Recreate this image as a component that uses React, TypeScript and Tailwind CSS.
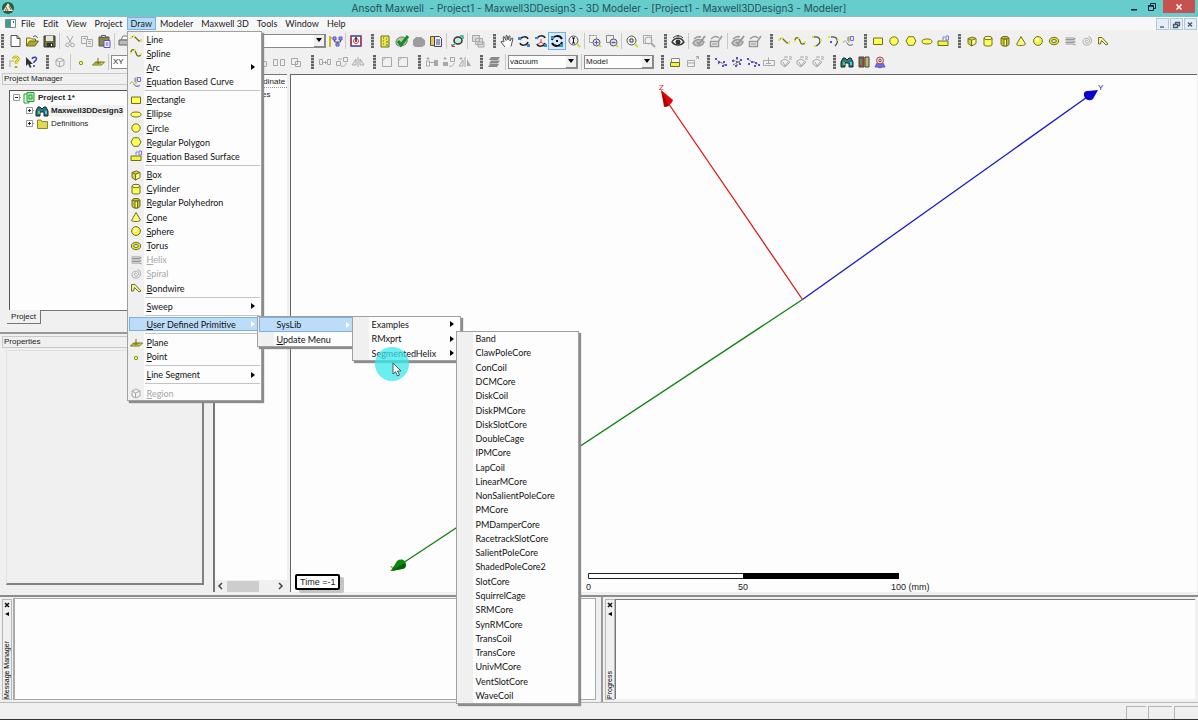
import { ReactNode, useState } from "react";

const Y = "#ffff55";
const D = "#6f6f20";
const G = "#a8a8a8";
const B = "#5050d8";

// Every icon is drawn on a 16x16 grid
const icons: Record<string, ReactNode> = {
    novo: <path d="M4 2.5h6l3 3v8H4zM10 2.5v3h3" fill="#fff" stroke="#555" />,
    open: <><path d="M2.500 13V5h4l1 1h4v2" fill="#f4f48c" stroke={D} /><path d="M2.500 13l3-5h9l-3.500 5z" fill="#a9a92c" stroke={D} /><path d="M9 4c2-2 4-1 4.500 1" stroke="#444" /></>,
    save: <><path d="M3 3h11v11H3z" fill="#6c7034" stroke="#333" /><path d="M5 3h7v5H5z" fill="#e6e6e6" /><path d="M6 10h6v4H6z" fill="#333" /><path d="M10 11h1v2h-1z" fill="#fff" /></>,
    cut: <><path d="M5 3l4 7M11 3l-4 7" stroke={G} /><circle cx="5.500" cy="12" r="1.800" stroke={G} /><circle cx="10.500" cy="12" r="1.800" stroke={G} /></>,
    copy: <><path d="M2.500 3.500h6v7h-6z" stroke={G} /><path d="M7.500 6.500h6v7h-6z" fill="#eee" stroke={G} /><path d="M9 8.500h3M9 10.500h3M4 5.500h3" stroke={G} /></>,
    paste: <><path d="M3 4h10v9H3z" fill="#8e8a3c" stroke="#555" /><path d="M5.500 2.500h4v2h-4z" fill="#ddd" stroke="#555" /><path d="M8 7.500h6v7H8z" fill="#fff" stroke={B} /><path d="M9.500 10h3M9.500 12h3" stroke={B} /></>,
    print: <><path d="M4 7l2-4h7l-2 4z" fill="#fff" stroke="#777" /><path d="M2 7h12v5H2z" fill="#bbb" stroke="#666" /></>,
    tree: <><path d="M3 3v11M3 5h2" stroke="#d8b820" strokeWidth="2" /><path d="M6 4h3v3H6zM12 4h3v3h-3zM9 10h3v3H9z" fill="#9a9ae8" stroke={B} /><path d="M7.500 7v2h6V7M10.500 9v1" stroke="#555" /></>,
    stop: <><path d="M3 3h10v10H3z" fill="#fff" stroke="#3a3a90" strokeWidth="1.500" /><path d="M3.500 3v10M12.500 3v10" stroke="#d33" /><circle cx="8" cy="8" r="2.500" stroke="#d33" /><path d="M8 4v5" stroke="#224" strokeWidth="1.500" /></>,
    valid: <><path d="M4 3h8v11H4z" fill="#e8e840" stroke={D} /><path d="M6 5h1M9 6h1M6 8h1M9 9h2M6 11h1M9 12h2" stroke="#665" /></>,
    check: <><path d="M2 9c0-3 3-5 6-5s6 2 5 5-4 4-7 4-4-1-4-4z" fill="#a8d0a8" stroke="#777" /><path d="M4 8l3 4 7-9" stroke="#188c28" strokeWidth="3" /></>,
    analyze: <path d="M2 12V7l3-3h5l4 3v5l-3 2H4z" fill="#9d9d9d" />,
    notes: <><path d="M2.500 3.500h6v9h-6z" fill="#e8c850" stroke="#555" /><path d="M6.500 3.500h5l2 2v8h-7z" fill="#ececff" stroke="#446" /><path d="M8 7h4M8 9h4M8 11h4" stroke="#446" /></>,
    field: <><ellipse cx="9" cy="7.500" rx="4" ry="3.500" fill="#c9e8de" stroke="#333" strokeWidth="1.500" /><path d="M3 13l4-3M11 3h3v3" stroke="#3a8" strokeWidth="1.500" /><path d="M3 11v2.500h3" stroke="#c33" /></>,
    windows: <path d="M2.500 2.500h7v6h-7zM5.500 5.500h7v6h-7zM8 9h6v5H8z" fill="#ddd" stroke={G} />,
    hand: <path d="M6 14l-4-5 1-1 2 1-1-5 1-.5 2 4V2.500h1L9 7l1-4h1v5l2-3 1 .5-2 8" fill="#fff" stroke="#555" />,
    rot1: <><path d="M4 7c1-4 7-4 8-1M12 9c-1 4-7 4-8 1" stroke="#222" strokeWidth="1.500" /><path d="M2 4h3v3H2zM11 11h3v3h-3z" fill="#38d" /></>,
    rot2: <><path d="M4 6c1-4 7-4 8-1M12 10c-1 4-7 4-8 1" stroke="#222" strokeWidth="1.500" /><path d="M8 6v3l-3 2M8 9l3 2" stroke="#d44" /><path d="M2 4h3v2H2zM11 11h3v3h-3z" fill="#38d" /></>,
    rot3: <><path d="M3 7c1-5 8-5 10-1M13 9c-1 5-8 5-10 1" stroke="#111" strokeWidth="2" /><path d="M2 3h3v3H2zM11 11h3v3h-3z" fill="#29c" /><path d="M7 7h2v2H7z" fill="#111" /></>,
    zoomI: <><circle cx="7.500" cy="7.500" r="4.500" fill="#eee" stroke="#555" /><path d="M7.500 5v5M6 5h3M6 10h3" stroke="#111" /><path d="M11 11l3 3" stroke="#d8d830" strokeWidth="2" /></>,
    zoomIn: <><path d="M2.500 2.500h7v7h-7z" stroke="#888" strokeDasharray="2 1" /><circle cx="9.500" cy="9.500" r="3.500" fill="#e4e4ff" stroke="#555" /><path d="M7.500 9.500h4M9.500 7.500v4" stroke={B} /><path d="M12 12l2 2" stroke="#d8d830" strokeWidth="2" /></>,
    zoomOut: <><path d="M2.500 2.500h7v7h-7z" stroke="#888" /><circle cx="9.500" cy="9.500" r="3.500" fill="#e4e4ff" stroke="#555" /><path d="M7.500 9.500h4" stroke={B} strokeWidth="1.500" /><path d="M12 12l2 2" stroke="#d8d830" strokeWidth="2" /></>,
    fit: <><circle cx="7.500" cy="7.500" r="4.500" fill="#eee" stroke="#555" /><path d="M6 6h3v3H6z" stroke="#444" /><path d="M11 11l3 3" stroke="#d8d830" strokeWidth="2" /></>,
    fitSel: <><path d="M2.500 2.500h8v8h-8z" stroke={G} /><circle cx="7.500" cy="7.500" r="3.500" stroke={G} /><path d="M10 10l4 4" stroke={G} strokeWidth="2" /></>,
    eye: <><path d="M2 9c3-5 9-5 12 0-3 4-9 4-12 0z" fill="#fff" stroke="#333" strokeWidth="1.300" /><circle cx="8" cy="9" r="2.500" fill="#333" /><path d="M3 5c3-3 7-3 10 0M8 2v2" stroke="#333" /></>,
    eyeOff: <><path d="M2 10c2-4 8-5 11-1-2 5-9 5-11 1zM3 6c2-2 5-3 7-2" fill="#ccc" stroke="#999" strokeWidth="1.500" /><path d="M6 9l2 2 6-8" stroke="#999" strokeWidth="2" /></>,
    eyeBox: <><path d="M3 6c3-3 6-3 8-1M2.500 8.500h8v5h-8zM10 9l4-6" stroke="#999" strokeWidth="1.500" /><path d="M4 10h5v2H4z" fill="#bbb" /></>,
    line: <><path d="M4 6l2-1 3 3 2 2 3-1" stroke={D} strokeWidth="1.300" /><path d="M2 6h2v2H2zM5 4h2v2H5zM12 9h2v2h-2z" fill="#e8e838" /></>,
    spline: <><path d="M3 8c0-5 4-4 5 0s4 4 5 1" stroke={D} strokeWidth="1.300" /><path d="M2 7h2v2H2zM6 4h2v2H6zM12 8h2v2h-2z" fill="#e8e838" /></>,
    arc: <><path d="M5 4c7-1 8 6 2 9" stroke="#555" strokeWidth="1.300" /><path d="M3 3h2v2H3zM11 6h2v2h-2zM5 12h2v2H5z" fill="#e0e030" /></>,
    arc2: <><path d="M6 4c7-1 8 5 4 9" stroke="#555" strokeWidth="1.300" /><path d="M3 3h2v2H3zM12 6h2v2h-2z" fill="#e0e030" /><path d="M5 8h2v2H5z" fill={B} /></>,
    eqCurve: <><path d="M2 10c2-4 3-2 4 0s3 3 6 1M8 3v7" stroke="#b8a830" /><path d="M7 4v4M9.500 3.500h3v4h-3zM6 10c1 3 5 3 6 1" stroke="#7070e0" /></>,
    rect: <path d="M3.500 5h9v6.500h-9z" fill={Y} stroke={D} />,
    ellipse: <ellipse cx="8" cy="8.500" rx="5" ry="2.500" fill={Y} stroke={D} />,
    circle: <circle cx="8" cy="8" r="4.200" fill={Y} stroke={D} />,
    polygon: <path d="M3 8l2.500-4.300h5L13 8l-2.500 4.300h-5z" fill={Y} stroke={D} />,
    eqSurf: <><path d="M3 8h10v4.500H3z" fill="#f4f440" stroke={D} /><path d="M8 7V4h2M11 3h2.500v4H11z" stroke="#7a7ae8" /></>,
    box: <><path d="M4 5.500L8.500 4 12 5.500v5L7.500 13 4 10.500z" fill="#d8d838" stroke={D} /><path d="M4 5.500l3.500 1.700V13M7.500 7.200L12 5.500" stroke={D} /><path d="M8.300 7.800l3-1.200v3.600l-3 1.600z" fill="#fdfdb8" /></>,
    cylinder: <><path d="M4 5v7c1 1.500 7 1.500 8 0V5z" fill={Y} stroke={D} /><ellipse cx="8" cy="5" rx="4" ry="1.700" fill="#fdfdb8" stroke={D} /></>,
    polyhedron: <><path d="M4 5v6.500L6 13h4l2-1.500V5l-2-1.500H6z" fill="#c4c438" stroke={D} /><path d="M7 6h2.500v7H7z" fill={Y} stroke={D} /><path d="M4 5l3 1h3l2-1" stroke={D} /></>,
    cone: <path d="M8 3.500L12.500 11c-1 2-8 2-9 .5z" fill="#fafa7a" stroke={D} />,
    sphere: <><circle cx="8" cy="8" r="4.400" fill="#f4f440" stroke={D} /><circle cx="7" cy="6.800" r="2" fill="#fdfdb8" /></>,
    torus: <><ellipse cx="8" cy="8" rx="4.700" ry="3.700" fill="#e4e440" stroke={D} /><ellipse cx="8" cy="8" rx="2.300" ry="1.500" fill="#f2f2f2" stroke={D} /></>,
    helix: <path d="M3.500 5h8l2 1M3.500 8h8l2 1M3.500 11h8l2 1M3.500 6.500h9M3.500 9.500h9" stroke="#999" strokeWidth="1.200" />,
    spiral: <path d="M8 8c1-1.500-1.500-1.500-1.500.5 0 2.500 4 2 4-.8 0-3.500-6.500-3.300-6.500 1 0 5 8.500 4.500 8.500-1 0-2-1-3.700-3-4.200" stroke={G} />,
    bond: <path d="M3.500 11V4.500h3.500l6 6.500-2 1L6.500 7.500 5.500 11z" fill="#f2f2a8" stroke={D} />,
    plane: <><path d="M2.500 11l3-3h9l-3 3z" fill="#e8e838" stroke={D} /><path d="M8 4v6M5 9h6" stroke={D} /></>,
    point: <circle cx="8" cy="9" r="1.700" fill={Y} stroke="#7f8f20" />,
    region: <><path d="M4 6l4-2 4 2v5l-4 2-4-2z" stroke={G} /><path d="M4 6l3.500 2v5M7.500 8L12 6" stroke={G} /></>,
    help1: <><path d="M3 13V7h4" stroke="#ccb" strokeWidth="2" /><path d="M6 5c1-4 7-2 5 1L9 8v2M9 12v2" stroke="#b8a800" strokeWidth="2.500" /><path d="M6 5c1-4 7-2 5 1L9 8v2" stroke="#ffff50" strokeWidth="1" /></>,
    help2: <><path d="M3 3v9l2-2 2 4 1.500-1L7 10h3z" fill="#333" /><path d="M9 5c1-3 6-2 4 1l-2 2v1M11 11v2" stroke="#3838b0" strokeWidth="1.500" /></>,
    unite: <path d="M3.500 4.500h6v6h-6zM7.500 7.500h5v5h-5z" stroke={G} />,
    sub: <path d="M2.500 5.500h4v6h-4zM9.500 5.500h4v6h-4z" stroke={G} />,
    move: <path d="M2.500 5.500h3v5h-3zM10.500 5.500h3v5h-3zM6 8.500h4M8 7l1.500 1.500L8 10" stroke={G} />,
    turn: <path d="M2.500 7.500h4v4h-4zM9.500 3.500h4v4h-4zM7 12c3 1 5-1 5-3M4 5h4" stroke={G} />,
    mirror: <path d="M8 3v10M6 5l-4 6h4zM10 5l4 6h-4z" stroke={G} />,
    fillet: <path d="M3.500 12.500v-9h9v9zM3.500 7l3.500-3.500" stroke={G} />,
    dupMove: <><path d="M2.500 7h3v5h-3zM6 8.500h4M4 3v3M2.500 4.500h3" stroke={G} /><path d="M10 6h4v6h-4z" fill={G} /></>,
    dupTurn: <><path d="M2 8h5v4H2z" fill={G} /><path d="M9.500 3.500h4v4h-4zM8 12c3 1 5-1 5-3M4 3v3M2.500 4.500h3" stroke={G} /></>,
    dupMirror: <><path d="M8 3v10M6 6l-4 6h4zM4 3v3M2.500 4.500h3" stroke={G} /><path d="M10 5l4 7h-4z" fill={G} /></>,
    layers: <path d="M5 3h9l-2 3H3zM5 6.500h9l-2 3H3zM4 10h9l-2 3H2z" fill="#8a8a8a" />,
    slice: <><path d="M4.500 4.500h8v4h-8z" fill="#fff" stroke="#888" /><path d="M3.500 8.500h9v4h-9z" fill="#f0f040" stroke={D} /></>,
    expand: <path d="M3.500 6.500h7v6h-7zM3.500 9h7M12 5l2-2M12 2.500h2.500V5" stroke={G} />,
    cs1: <><path d="M3 5l3 3 3 1 4 3M5 10l3-2" stroke="#555" strokeDasharray="2 1" /><path d="M2 4h2v2H2zM5 7h2v2H5zM10 7h2v2h-2zM9 11h2v2H9zM12 10h2v2h-2z" fill={B} /></>,
    cs2: <><path d="M8 4v9M4 6l7 3M4 11l7-4" stroke="#555" strokeDasharray="2 1" /><path d="M7 3h2v2H7zM3 6h2v2H3zM11 5h2v2h-2zM6 11h2v2H6zM10 9h2v2h-2z" fill={B} /></>,
    cs3: <><path d="M3 5l4 3h4l3 3M10 12l2-2" stroke="#555" strokeDasharray="2 1" /><path d="M2 4h2v2H2zM6 7h2v2H6zM3 9h2v2H3zM10 8h2v2h-2zM13 10h2v2h-2zM9 11h2v2H9z" fill={B} /></>,
    face: <path d="M2.500 6.500h11v5h-11zM7.500 3.500v6M5 9.500h5" stroke={G} />,
    face2: <path d="M3 7l4-2 5 3-5 5-4-3zM5 8l2 4 3-4M6 3h2M9 2v2M11 3h3M11 5h3" stroke={G} />,
    bino: <><path d="M2 13V8l2-4h2l2 2 2-2h2l2 4v5h-4v-4H6v4z" fill="#287c8c" stroke="#222" /><path d="M4 8h2v3H4z" fill="#5ac86a" /><path d="M11 8h2v3h-2z" fill="#40d0e0" /></>,
    cols: <><path d="M3 3h5v10H3z" fill="#a05048" stroke="#444" /><path d="M9 3h4v10H9z" fill="#c8b860" stroke="#444" /><path d="M5 5v6" stroke="#4a4" strokeWidth="1.500" /></>,
    award: <><path d="M5 9l-2 4h3l2 1 2-1h3l-2-4" fill="#7a6ae0" stroke="#65c" /><circle cx="8" cy="6.500" r="3.500" fill="#f4dada" stroke="#a44" /><circle cx="8" cy="6.500" r="1.300" stroke="#555" /></>,
    project: <><path d="M3 4h5v9H3z" fill="#e8ffe8" stroke="#2b9a3c" /><path d="M6 2.500h7v9H6z" fill="#a8f0a8" stroke="#2b9a3c" /><path d="M8 5h3v4H8z" stroke="#2b9a3c" /></>,
    folder: <path d="M3.500 12.500V4h3.500l1 1.500h5.500v7z" fill="#e0d850" stroke="#8a8430" />,
};

function Icon({ name }: { name: string }) {
    return (
        <svg viewBox="0 0 16 16" className="block h-4 w-4 shrink-0" fill="none" aria-hidden="true">
            {icons[name]}
        </svg>
    );
}

interface MenuEntry {
    label: string;
    icon?: string;
    disabled?: boolean;
    open?: boolean;
    plain?: boolean;
    items?: MenuItems;
    menuClass?: string;
}

type MenuItems = (MenuEntry | null)[];

const machines = [
    "Band", "ClawPoleCore", "ConCoil", "DCMCore", "DiskCoil", "DiskPMCore", "DiskSlotCore", "DoubleCage", "IPMCore",
    "LapCoil", "LinearMCore", "NonSalientPoleCore", "PMCore", "PMDamperCore", "RacetrackSlotCore", "SalientPoleCore",
    "ShadedPoleCore2", "SlotCore", "SquirrelCage", "SRMCore", "SynRMCore", "TransCoil", "TransCore", "UnivMCore",
    "VentSlotCore", "WaveCoil",
];

const sysLib: MenuItems = [
    { label: "Examples", plain: true, items: [] },
    { label: "RMxprt", plain: true, menuClass: "w-[123px] h-[373px]", items: machines.map((label) => ({ label, plain: true })) },
    { label: "SegmentedHelix", plain: true, items: [] },
];

const drawMenu: MenuItems = [
    { label: "Line", icon: "line" },
    { label: "Spline", icon: "spline" },
    { label: "Arc", items: [] },
    { label: "Equation Based Curve", icon: "eqCurve" },
    null,
    { label: "Rectangle", icon: "rect" },
    { label: "Ellipse", icon: "ellipse" },
    { label: "Circle", icon: "circle" },
    { label: "Regular Polygon", icon: "polygon" },
    { label: "Equation Based Surface", icon: "eqSurf" },
    null,
    { label: "Box", icon: "box" },
    { label: "Cylinder", icon: "cylinder" },
    { label: "Regular Polyhedron", icon: "polyhedron" },
    { label: "Cone", icon: "cone" },
    { label: "Sphere", icon: "sphere" },
    { label: "Torus", icon: "torus" },
    { label: "Helix", icon: "helix", disabled: true },
    { label: "Spiral", icon: "spiral", disabled: true },
    { label: "Bondwire", icon: "bond" },
    null,
    { label: "Sweep", items: [] },
    null,
    {
        label: "User Defined Primitive", open: true, menuClass: "w-[100px] h-[31px]", items: [
            { label: "SysLib", open: true, plain: true, menuClass: "w-[109px] h-[45px]", items: sysLib },
            { label: "Update Menu" },
        ],
    },
    null,
    { label: "Plane", icon: "plane" },
    { label: "Point", icon: "point" },
    null,
    { label: "Line Segment", items: [] },
    null,
    { label: "Region", icon: "region", disabled: true },
];

function Menu({ items, className }: { items: MenuItems; className: string }) {
    return (
        <ul className={`absolute z-10 flex flex-col border border-[#a0a0a0] bg-[#fdfdfd] bg-[linear-gradient(to_right,#f0f0f0_16px,#fdfdfd_16px)] px-px shadow-[2px_2px_1px_#8c8c8c] ${className}`}>
            {items.map((item, i) =>
                item === null ? (
                    <li key={i} className="flex h-1 shrink-0 items-center pl-4"><hr className="w-full border-[#c4c4c4]" /></li>
                ) : (
                    <li key={i} className="relative flex min-h-0 flex-1">
                        <button
                            disabled={item.disabled}
                            className={`flex w-full items-center whitespace-nowrap text-left ${item.open ? "bg-[#bcdcf8] outline outline-[#7db0de] -outline-offset-1" : ""} ${item.disabled ? "text-[#a6a6a6]" : "text-[#111]"}`}
                        >
                            <span className="flex w-[15px] shrink-0 justify-center">{item.icon && <Icon name={item.icon} />}</span>
                            <span className="grow pl-[3px]">
                                {item.plain ? item.label : <><u>{item.label[0]}</u>{item.label.slice(1)}</>}
                            </span>
                            {item.items && (
                                <svg viewBox="0 0 4 6" className={`mr-[5px] h-[6px] w-1 ${item.open ? "fill-white" : "fill-black"}`} aria-hidden="true">
                                    <path d="M0 0l4 3-4 3z" />
                                </svg>
                            )}
                        </button>
                        {item.items && item.menuClass && (
                            <Menu items={item.items} className={`left-full -top-px -ml-[3px] ${item.menuClass}`} />
                        )}
                    </li>
                )
            )}
        </ul>
    );
}

function Tool({ name, active }: { name: string; active?: boolean }) {
    return (
        <button aria-label={name} className={`h-4 w-4 shrink-0 ${active ? "bg-[#d6eafc] outline outline-[#78aee6]" : ""}`}>
            <Icon name={name} />
        </button>
    );
}

// "|" draws a divider between two tools
function Tools({ list, active }: { list: string; active?: string }) {
    return (
        <>
            {list.split(" ").map((name, i) =>
                name === "|" ? <Divider key={i} /> : <Tool key={i} name={name} active={name === active} />
            )}
        </>
    );
}

function Divider() {
    return <span className="mx-px h-4 w-px shrink-0 bg-[#c8c8c8]" />;
}

function Group({ className = "", children }: { className?: string; children: ReactNode }) {
    return (
        <div className="flex shrink-0 items-center gap-[3px]">
            <span className="h-[14px] w-[3px] bg-[repeating-linear-gradient(#666_0_2px,#bbb_2px_3px)]" />
            <div className={`flex items-center justify-between ${className}`}>{children}</div>
        </div>
    );
}

function Combo({ label, value, className }: { label: string; value: string; className: string }) {
    return (
        <div className={`relative h-[14px] border border-[#8a8a8a] bg-[#fdfdfd] ${className}`}>
            <select aria-label={label} className="block h-3 w-full appearance-none pl-px font-['Liberation_Sans',sans-serif] text-[8px] leading-3 text-[#222]">
                <option>{value}</option>
            </select>
            <span className="pointer-events-none absolute inset-y-0 right-0 flex w-[11px] items-center justify-center border-r border-b border-[#888] bg-[#f0f0f0]">
                <svg viewBox="0 0 6 4" className="h-1 w-[6px]" aria-hidden="true"><path d="M0 0h6L3 4z" /></svg>
            </span>
        </div>
    );
}

function TreeRow({ label, icon, level, bold, expander }: { label: string; icon: string; level: number; bold?: boolean; expander: string }) {
    return (
        <li className={`flex h-[13px] items-center whitespace-nowrap ${level === 1 ? "pl-4" : "pl-[3px]"} ${bold ? "font-bold" : ""}`}>
            <svg viewBox="0 0 8 7" className="h-[7px] w-2 shrink-0" fill="none" aria-hidden="true">
                <path d="M.5 .5h6v6h-6zM7 3.500h1" stroke="#999" />
                <path d={expander === "-" ? "M2 3.500h3" : "M2 3.500h3M3.500 2v3"} stroke="#222" />
            </svg>
            <Icon name={icon} />
            <span className={level === 1 && bold ? "bg-[#f0f0f0] px-px" : "px-px"}>{label}</span>
        </li>
    );
}

function SideTitle({ children }: { children: string }) {
    return (
        <div className="my-[2px] ml-[2px] flex w-[10px] shrink-0 flex-col items-center border border-[#b8b8b8] pt-[2px]">
            <button aria-label={`Close ${children}`} className="h-[6px] w-[6px]">
                <svg viewBox="0 0 6 6" className="block" aria-hidden="true"><path d="M1 1l4 4M5 1L1 5" stroke="#111" strokeWidth="1.500" /></svg>
            </button>
            <svg viewBox="0 0 4 4" className="mt-1 h-1 w-1" aria-hidden="true"><path d="M4 0v4L0 2z" /></svg>
            <h2 className="mt-auto rotate-180 text-[7px] leading-[8px] text-black [writing-mode:vertical-rl]">{children}</h2>
        </div>
    );
}

function AxisView() {
    return (
        <svg className="block h-full w-full" aria-label="Coordinate axes">
            <g transform="translate(-291 -75)" fontFamily="Liberation Sans, sans-serif" fontSize="8">
                <path d="M802.500 299.500L664 97" stroke="#e01818" strokeWidth="1.300" />
                <path d="M661 90l12 10c-1 4-6 7-9 7z" fill="#e00808" />
                <path d="M661 90l4 17 4-1z" fill="#a80000" />
                <path d="M802.500 299.500L1090 95" stroke="#1818c8" strokeWidth="1.300" />
                <path d="M1098 90l-5 9c-4 3-10 0-9-6 1-2 3-2 4-2z" fill="#0606cc" />
                <path d="M802.500 299.500L400 565" stroke="#108010" strokeWidth="1.300" />
                <path d="M391 571l6-10c4-3 9-1 9 4 0 3-2 4-4 4z" fill="#0d870d" />
                <path d="M391 571l14-8c2 2 0 6-3 6z" fill="#066006" />
                <text x="659" y="90" fill="#e01818">Z</text>
                <text x="1098" y="90" fill="#1010c0">Y</text>
                <text x="390" y="571" fill="#107010">X</text>
                <path d="M588.500 573.500h155v5h-155z" fill="#fff" stroke="#222" />
                <path d="M743 573h156v6H743z" fill="#000" />
                <g fill="#222" fontSize="9">
                    <text x="586" y="590">0</text>
                    <text x="738" y="590">50</text>
                    <text x="891" y="590">100 (mm)</text>
                </g>
            </g>
        </svg>
    );
}

const menuNames = ["File", "Edit", "View", "Project", "Draw", "Modeler", "Maxwell 3D", "Tools", "Window", "Help"];

export default function App() {
    const [openMenu, setOpenMenu] = useState("Draw");

    return (
        <div className="relative flex h-screen flex-col overflow-hidden border-b border-[#333] bg-[#f0f0f0] font-['Liberation_Sans',sans-serif] text-[8px] text-[#222]">
            <header className="grid h-[17px] shrink-0 grid-cols-[1fr_auto_1fr] border-b border-[#8fbdbd] bg-[#66cccc]">
                <svg viewBox="0 0 14 14" className="mt-px ml-px h-[14px] w-[14px]" aria-hidden="true">
                    <circle cx="7" cy="7" r="6" fill="#20603c" />
                    <path d="M7 2l5 8H2z" fill="#f2e8e0" />
                    <path d="M5 6l2 4M8 5l2 4M4 8l1 2" stroke="#c04838" />
                </svg>
                <h1 className="whitespace-pre font-['Inter',sans-serif] text-[10px] leading-4 text-[#24505a]">
                    Ansoft Maxwell  - Project1 - Maxwell3DDesign3 - 3D Modeler - [Project1 - Maxwell3DDesign3 - Modeler]
                </h1>
                <div className="flex justify-end pr-[3px]">
                    <button aria-label="Minimize" className="flex h-[13px] w-[18px] items-center justify-center">
                        <svg viewBox="0 0 8 8" className="h-2 w-2"><path d="M1 6h6v1.500H1z" fill="#123" /></svg>
                    </button>
                    <button aria-label="Restore" className="mr-[2px] flex h-[13px] w-[18px] items-center justify-center">
                        <svg viewBox="0 0 8 8" className="h-2 w-2" fill="none" stroke="#123"><path d="M.5 2.500h5v5h-5zM2.500 2V.5h5v5H6" /><path d="M.5 3h5" strokeWidth="1.500" /></svg>
                    </button>
                    <button aria-label="Close" className="flex h-[13px] w-8 items-center justify-center bg-[#c75050]">
                        <svg viewBox="0 0 8 8" className="h-2 w-2"><path d="M1.500 1.500l5 5M6.500 1.500l-5 5" stroke="#fff" strokeWidth="1.500" /></svg>
                    </button>
                </div>
            </header>

            <nav className="flex h-[13px] shrink-0 items-center bg-[#f6f7f7] pl-[5px] font-['Lato',sans-serif] text-[9px] leading-[13px]">
                <svg viewBox="0 0 11 9" className="mr-px h-[9px] w-[11px]" aria-hidden="true">
                    <path d="M.5 .5h10v8H.5z" fill="#fff" stroke="#789" />
                    <path d="M1 1h5v7H1z" fill="#4a9a8a" />
                    <path d="M8 2h1v2H8z" fill="#456" />
                </svg>
                {menuNames.map((name) => (
                    <div key={name} className="relative">
                        <button
                            onClick={() => setOpenMenu(openMenu === name ? "" : name)}
                            className={`h-[13px] px-1 whitespace-nowrap ${openMenu === name ? "bg-[#b4daf8] outline outline-[#7db0de] -outline-offset-1" : ""}`}
                        >
                            {name}
                        </button>
                        {name === "Draw" && openMenu === name && <Menu items={drawMenu} className="top-[14px] left-0 h-[370px] w-[135px]" />}
                    </div>
                ))}
                <div className="ml-auto flex gap-px pr-px">
                    {["M3 8h4", "M2.500 5.500h4v3h-4zM4.500 5V3.500h4v3H7", "M3 3.500l4 4M7 3.500l-4 4"].map((d, i) => (
                        <button key={d} aria-label={["Minimize window", "Restore window", "Close window"][i]} className="h-3 w-[13px] border border-[#b4c8dc] bg-[#e4eef8]">
                            <svg viewBox="0 0 11 10" className="block h-[10px] w-[11px]"><path d={d} fill="none" stroke="#445a70" strokeWidth="1.300" /></svg>
                        </button>
                    ))}
                </div>
            </nav>

            <div className="h-[43px] shrink-0">
                <div className="flex h-[21px] items-center gap-[7px] pl-px">
                    <Group className="w-[357px] gap-px">
                        <Tools list="novo open save | cut copy paste | print" />
                        <Combo label="Solution" value="" className="flex-1" />
                        <Tools list="tree | stop" />
                    </Group>
                    <Group className="w-[109px]"><Tools list="valid check analyze notes | field | windows" /></Group>
                    <Group className="w-[158px]"><Tools list="hand rot1 rot2 rot3 zoomI | zoomIn zoomOut | fit fitSel" active="rot3" /></Group>
                    <Group className="w-[93px]"><Tools list="eye | eyeOff eyeBox | eyeOff eyeBox" /></Group>
                    <Group className="w-[81px]"><Tools list="line spline arc arc2 eqCurve" /></Group>
                    <Group className="w-[81px]"><Tools list="rect circle polygon ellipse eqSurf" /></Group>
                    <Group className="w-[147px]"><Tools list="box cylinder polyhedron cone sphere torus helix spiral bond" /></Group>
                </div>
                <div className="flex h-[21px] items-center gap-[7px] pl-px">
                    <Group className="w-8"><Tools list="help1 help2" /></Group>
                    <Group className="w-[252px] gap-px">
                        <Tools list="region | point plane |" />
                        <Combo label="Drawing plane" value="XY" className="flex-1" />
                        <Tools list="unite sub unite" />
                    </Group>
                    <Group className="w-[49px]"><Tools list="move turn mirror" /></Group>
                    <Group className="w-8"><Tools list="fillet fillet" /></Group>
                    <Group className="w-[49px]"><Tools list="dupMove dupTurn dupMirror" /></Group>
                    <Group className="w-[168px]">
                        <Tools list="layers |" />
                        <Combo label="Material" value="vacuum" className="w-[70px]" />
                        <Divider />
                        <Combo label="Mode" value="Model" className="w-[70px]" />
                    </Group>
                    <Group className="w-[33px]"><Tools list="slice expand" /></Group>
                    <Group className="w-[113px]"><Tools list="cs1 cs2 cs3 face face2 face2 face2" /></Group>
                    <Group className="w-[49px]"><Tools list="bino cols award" /></Group>
                </div>
            </div>

            <main className="flex min-h-0 flex-1">
                <aside className="flex w-[213px] shrink-0 flex-col">
                    <section className="flex h-[261px] flex-col border-b-2 border-[#999]">
                        <h2 className="ml-[2px] h-3 border border-[#c8c8c8] pl-px leading-[10px]">Project Manager</h2>
                        <ul className="mt-[5px] mr-2 ml-[9px] flex-1 border-t border-l border-[#555] bg-[#fdfdfd]">
                            <TreeRow label="Project 1*" icon="project" level={0} bold expander="-" />
                            <TreeRow label="Maxwell3DDesign3" icon="bino" level={1} bold expander="+" />
                            <TreeRow label="Definitions" icon="folder" level={1} expander="+" />
                        </ul>
                        <div className="mr-2 mb-2 flex h-[14px] pl-[7px]">
                            <button className="w-[34px] border-r border-b border-[#777]">Project</button>
                            <span className="flex-1 border-t border-[#777]" />
                        </div>
                    </section>
                    <section className="flex min-h-0 flex-1 flex-col">
                        <h2 className="mt-[2px] ml-[2px] h-3 border border-[#c8c8c8] pl-px leading-[10px]">Properties</h2>
                        <div className="mt-[2px] mr-[9px] mb-[10px] ml-[6px] flex-1 border-r-2 border-b-2 border-t border-l border-[#808080] border-t-[#e2e2e2] border-l-[#e2e2e2]" />
                    </section>
                </aside>

                <section className="mt-px mb-[3px] flex w-[74px] shrink-0 flex-col border-t border-l-2 border-[#777] bg-[#fdfdfd]" aria-label="History tree">
                    <ul className="flex-1 pl-[31px]">
                        <li className="h-[13px] border-b border-dotted border-[#999] leading-[13px]">Coordinate</li>
                        <li className="leading-[13px]">Planes</li>
                    </ul>
                    <div className="flex h-3 items-center bg-[#f0f0f0]">
                        <button aria-label="Scroll left" className="w-3"><svg viewBox="0 0 12 8" className="h-2 w-3"><path d="M7 1L4 4l3 3" fill="none" stroke="#444" strokeWidth="1.500" /></svg></button>
                        <span className="h-[11px] w-8 bg-[#cdcdcd]" />
                        <button aria-label="Scroll right" className="ml-auto w-3"><svg viewBox="0 0 12 8" className="h-2 w-3"><path d="M4 1l3 3-3 3" fill="none" stroke="#444" strokeWidth="1.500" /></svg></button>
                    </div>
                </section>

                <section className="relative mt-px mr-px mb-[3px] ml-[3px] min-w-0 flex-1 border-t border-l border-[#666] bg-[#fdfdfd]" aria-label="Modeler">
                    <AxisView />
                    <p className="absolute bottom-[2px] left-1 rounded-[2px] border-2 border-black bg-white px-[3px] text-[9px] leading-3 shadow-[4px_3px_0_#c4c4c4]">Time =-1</p>
                </section>
            </main>

            <div className="flex h-[108px] shrink-0 border-t-2 border-b border-[#8c8c8c] border-b-[#b8b8b8]">
                <section className="flex w-[603px] shrink-0 border-r-2 border-[#999]">
                    <SideTitle>Message Manager</SideTitle>
                    <div className="mt-px mr-[5px] mb-[2px] ml-px flex-1 border border-l-2 border-[#aaa] bg-[#fdfdfd]" />
                </section>
                <section className="flex min-w-0 flex-1">
                    <SideTitle>Progress</SideTitle>
                    <div className="mt-[2px] mr-[3px] mb-[3px] flex-1 border-t border-l border-[#777] bg-[#fdfdfd]" />
                </section>
            </div>

            <footer className="flex h-4 shrink-0 justify-end gap-[2px] pt-[3px]">
                <span className="w-5 border-t border-l border-[#b4b4b4]" />
                <span className="w-6 border-t border-l border-[#b4b4b4]" />
                <span className="w-6 border-t border-l border-[#b4b4b4]" />
            </footer>

            {/* Mouse pointer with its highlight */}
            <svg viewBox="0 0 36 36" className="pointer-events-none absolute top-[346px] left-[374px] z-20 h-9 w-9" aria-hidden="true">
                <circle cx="18" cy="18" r="17" fill="#38e8ea" fillOpacity=".75" />
                <path d="M19 17v11l2.500-2.300 2 4.300 2-1-2-4h3.500z" fill="#fff" stroke="#333" strokeWidth=".8" />
            </svg>
        </div>
    );
}
